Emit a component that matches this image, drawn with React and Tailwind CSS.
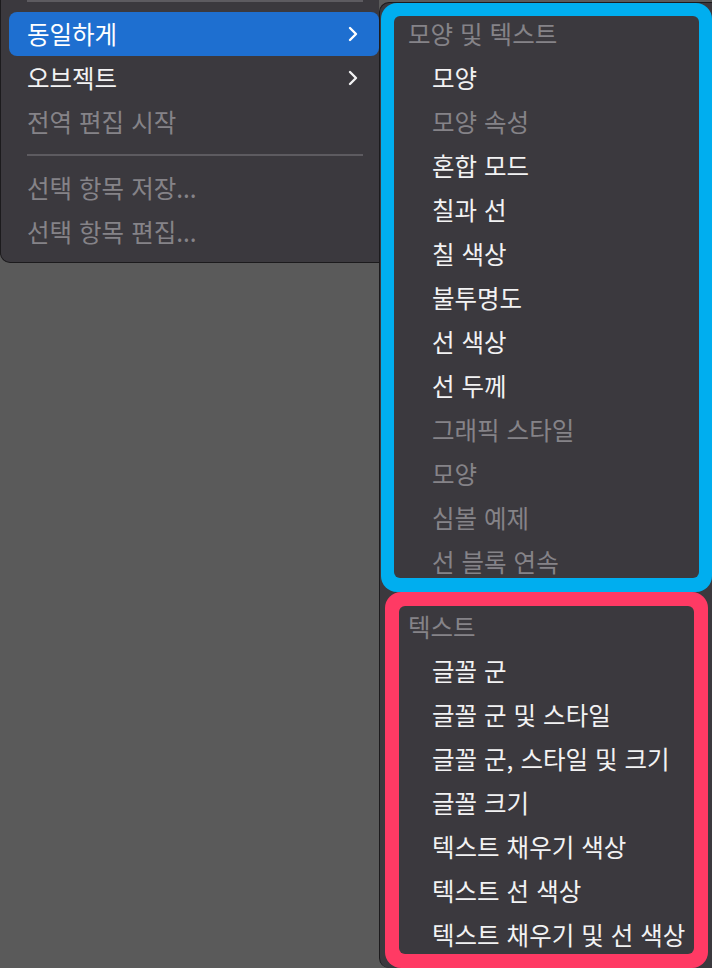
import React from 'react';

const mainItems = [
  { label: '동일하게', active: true, arrow: true },
  { label: '오브젝트', arrow: true },
  { label: '전역 편집 시작', disabled: true },
  { sep: true },
  { label: '선택 항목 저장...', disabled: true },
  { label: '선택 항목 편집...', disabled: true },
];

const shapeItems = [
  { label: '모양' },
  { label: '모양 속성', disabled: true },
  { label: '혼합 모드' },
  { label: '칠과 선' },
  { label: '칠 색상' },
  { label: '불투명도' },
  { label: '선 색상' },
  { label: '선 두께' },
  { label: '그래픽 스타일', disabled: true },
  { label: '모양', disabled: true },
  { label: '심볼 예제', disabled: true },
  { label: '선 블록 연속', disabled: true },
];

const textItems = [
  { label: '글꼴 군' },
  { label: '글꼴 군 및 스타일' },
  { label: '글꼴 군, 스타일 및 크기' },
  { label: '글꼴 크기' },
  { label: '텍스트 채우기 색상' },
  { label: '텍스트 선 색상' },
  { label: '텍스트 채우기 및 선 색상' },
];

const Chevron = () => (
  <svg width="12" height="16" viewBox="0 0 12 16" fill="none">
    <path d="M3 2l6 6-6 6" stroke="currentColor" strokeWidth="2.4" strokeLinecap="round" strokeLinejoin="round" />
  </svg>
);

const SubRow = ({ item, indent }) => (
  <div
    className={`h-[44px] flex items-center whitespace-nowrap ${indent} ${
      item.disabled ? 'text-[#858388]' : 'text-[#f2f2f3]'
    }`}
  >
    {item.label}
  </div>
);

export default function App() {
  return (
    <div
      className="w-[712px] h-[968px] overflow-hidden bg-[#5a5a5a] flex items-start text-[24.5px] font-normal leading-none [word-spacing:1.5px]"
      style={{ fontFamily: '"Noto Sans CJK KR", "Noto Sans", sans-serif' }}
    >
      {/* main menu */}
      <div className="w-[379px] shrink-0 h-[263px] bg-[#3b393e] rounded-bl-[10px] border-l border-b border-[#1c1b1d] pl-2">
        <div className="h-[2px] ml-[18px] mr-[16px] bg-[#5d5b60] mb-[10px]" />
        {mainItems.map((item, i) =>
          item.sep ? (
            <div key={i} className="h-[22px] flex items-center">
              <div className="h-[2px] w-full ml-[18px] mr-[16px] bg-[#5d5b60]" />
            </div>
          ) : (
            <div
              key={i}
              className={`h-[44px] flex items-center justify-between pl-[18px] pr-[20px] rounded-[8px] ${
                item.active ? 'bg-[#1e6fd0] text-white' : item.disabled ? 'text-[#858388]' : 'text-[#f2f2f3]'
              }`}
            >
              <span>{item.label}</span>
              {item.arrow && <Chevron />}
            </div>
          )
        )}
      </div>

      {/* submenu */}
      <div className="flex-1 mt-[2px] h-[966px] bg-[#3b393e] border-l border-t border-[#1c1b1d] rounded-tl-[10px] rounded-bl-[10px]">
        <div className="ml-px w-[331px] bg-[#00aeef] rounded-[16px] pt-[13px] px-[13px] pb-[14px]">
          <div className="h-[562px] overflow-hidden rounded-[6px] bg-[#3b393e]">
            <div className="-mt-1">
              <div className="h-[44px] flex items-center pl-[14px] text-[#858388]">모양 및 텍스트</div>
              {shapeItems.map((item, i) => (
                <SubRow key={i} item={item} indent="pl-[38px]" />
              ))}
            </div>
          </div>
        </div>
        <div className="ml-[5px] w-[323px] bg-[#ff3a64] rounded-[16px] pt-[14px] px-[14px] pb-[14px]">
          <div className="h-[348px] overflow-hidden rounded-[6px] bg-[#3b393e]">
            <div className="-mt-px">
              <div className="h-[44px] flex items-center pl-[9px] text-[#858388]">텍스트</div>
              {textItems.map((item, i) => (
                <SubRow key={i} item={item} indent="pl-[33px]" />
              ))}
            </div>
          </div>
        </div>
      </div>
    </div>
  );
}
